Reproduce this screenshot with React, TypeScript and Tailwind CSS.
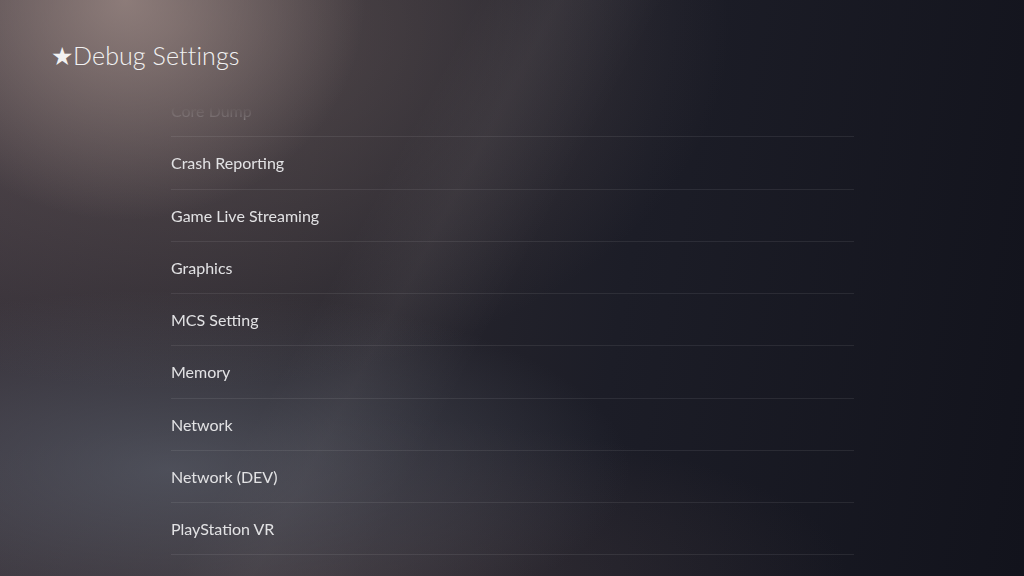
const items = [
    "Core Dump",
    "Crash Reporting",
    "Game Live Streaming",
    "Graphics",
    "MCS Setting",
    "Memory",
    "Network",
    "Network (DEV)",
    "PlayStation VR",
]

const App = () => {
    return (
        <div className="relative h-[576px] w-full overflow-hidden font-['Lato','Noto_Sans',sans-serif] bg-[#15161f] bg-[radial-gradient(ellipse_240px_220px_at_125px_0px,rgba(165,145,140,0.7),transparent),radial-gradient(ellipse_560px_360px_at_170px_30px,rgba(122,106,104,0.5),transparent),radial-gradient(ellipse_460px_180px_at_170px_470px,rgba(95,101,114,0.6),transparent),radial-gradient(ellipse_520px_160px_at_330px_576px,rgba(82,68,70,0.45),transparent),linear-gradient(118deg,transparent_36%,rgba(255,240,235,0.05)_42%,transparent_50%),linear-gradient(100deg,#38323a_0%,#2c2930_30%,#1c1d27_60%,#12131c_100%)]">
            <h1 className="pl-[51px] pt-[38px] text-[25px] leading-[34px] font-light tracking-[0.1px] text-[#f2f2f2]">
                ★Debug Settings
            </h1>
            <ul className="ml-[171px] mt-[13px] w-[683px] [mask-image:linear-gradient(to_bottom,transparent_22px,rgba(0,0,0,0.18)_32px,black_52px)]">
                {items.map((item) => (
                    <li
                        key={item}
                        className="flex h-[52.25px] items-center border-b border-white/[0.08] text-[16px] font-normal text-[#e2e2e4]"
                    >
                        <span className="pt-[1px]">{item}</span>
                    </li>
                ))}
            </ul>
        </div>
    )
}

export default App
